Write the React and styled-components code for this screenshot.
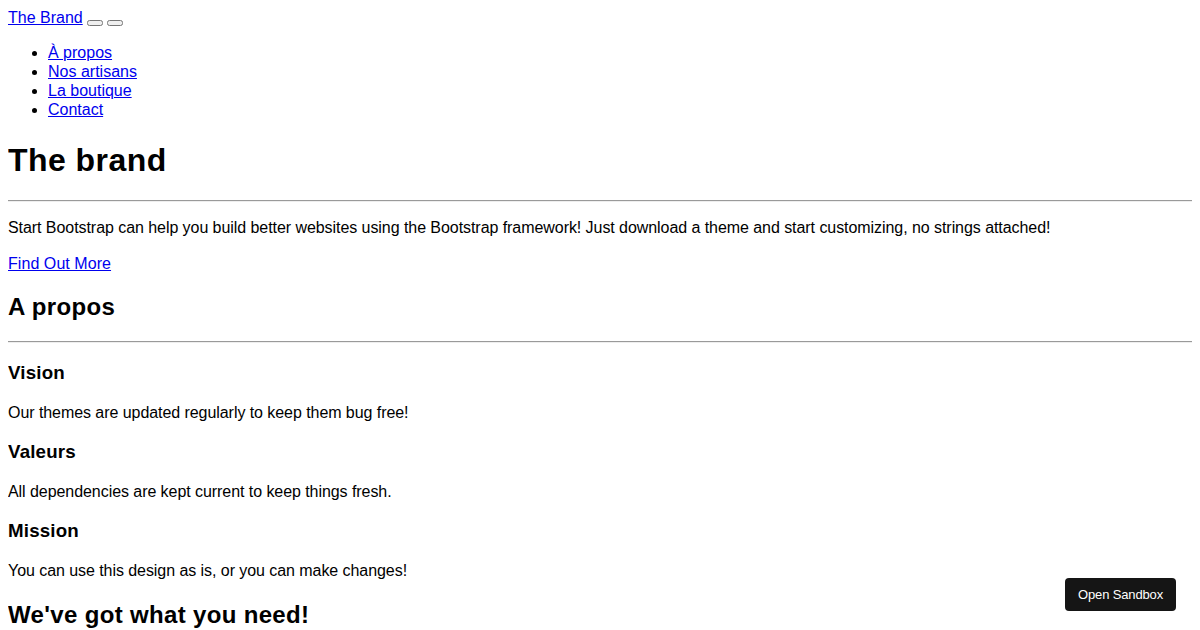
import styled, { createGlobalStyle } from 'styled-components';

const GlobalStyle = createGlobalStyle`
  body {
    margin: 8px;
    font-family: "Liberation Sans", Arial, sans-serif;
    line-height: 1.2;
    color: #000;
    background: #fff;
  }
`;

const Nav = styled.nav`
  display: block;
`;

const Brand = styled.a`
  color: #0000ee;
  text-decoration: underline;
`;

const Toggler = styled.button`
  margin: 0 0 0 4px;
  vertical-align: baseline;
`;

const Menu = styled.ul`
  margin: 16px 0;
  padding-left: 40px;
  list-style: disc;
`;

const MenuItem = styled.li`
  line-height: 19px;
`;

const MenuLink = styled.a`
  color: #0000ee;
  text-decoration: underline;
`;

const Title = styled.h1`
  font-size: 32px;
  letter-spacing: 0.014em;
  margin: 21.44px 0;
`;

const SectionTitle = styled.h2`
  font-size: 24px;
  letter-spacing: 0.014em;
  margin: 19.92px 0;
`;

const Divider = styled.hr`
  margin: 8px 0;
  border: 0;
  border-top: 1px solid #9a9a9a;
  border-bottom: 1px solid #eee;
`;

const Text = styled.p`
  margin: 16px 0;
  letter-spacing: -0.06px;
`;

const TextLink = styled.a`
  color: #0000ee;
  text-decoration: underline;
  letter-spacing: 0.06px;
`;

const Feature = styled.h3`
  font-size: 18.72px;
  letter-spacing: 0.01em;
  margin: 18.72px 0;
`;

const SandboxButton = styled.button`
  position: fixed;
  right: 24px;
  bottom: 19px;
  height: 33px;
  padding: 0 13px;
  border: 0;
  border-radius: 4px;
  background: #151515;
  color: #fff;
  font-family: "Liberation Sans", Arial, sans-serif;
  font-size: 13px;
  letter-spacing: -0.15px;
  cursor: pointer;
`;

const links = ['À propos', 'Nos artisans', 'La boutique', 'Contact'];

const features = [
  { title: 'Vision', text: 'Our themes are updated regularly to keep them bug free!' },
  { title: 'Valeurs', text: 'All dependencies are kept current to keep things fresh.' },
  { title: 'Mission', text: 'You can use this design as is, or you can make changes!' },
];

export default function App() {
  return (
    <>
      <GlobalStyle />
      <Nav>
        <Brand href="#top">The Brand</Brand>
        <Toggler type="button" />
        <Toggler type="button" />
        <div>
          <Menu>
            {links.map(l => (
              <MenuItem key={l}>
                <MenuLink href="#top">{l}</MenuLink>
              </MenuItem>
            ))}
          </Menu>
        </div>
      </Nav>
      <header>
        <Title>The brand</Title>
        <Divider />
        <Text>
          Start Bootstrap can help you build better websites using the Bootstrap framework! Just
          download a theme and start customizing, no strings attached!
        </Text>
        <Text>
          <TextLink href="#about">Find Out More</TextLink>
        </Text>
      </header>
      <section id="about">
        <SectionTitle>A propos</SectionTitle>
        <Divider />
        {features.map(f => (
          <div key={f.title}>
            <Feature>{f.title}</Feature>
            <Text>{f.text}</Text>
          </div>
        ))}
      </section>
      <section>
        <SectionTitle>We've got what you need!</SectionTitle>
      </section>
      <SandboxButton type="button">Open Sandbox</SandboxButton>
    </>
  );
}
